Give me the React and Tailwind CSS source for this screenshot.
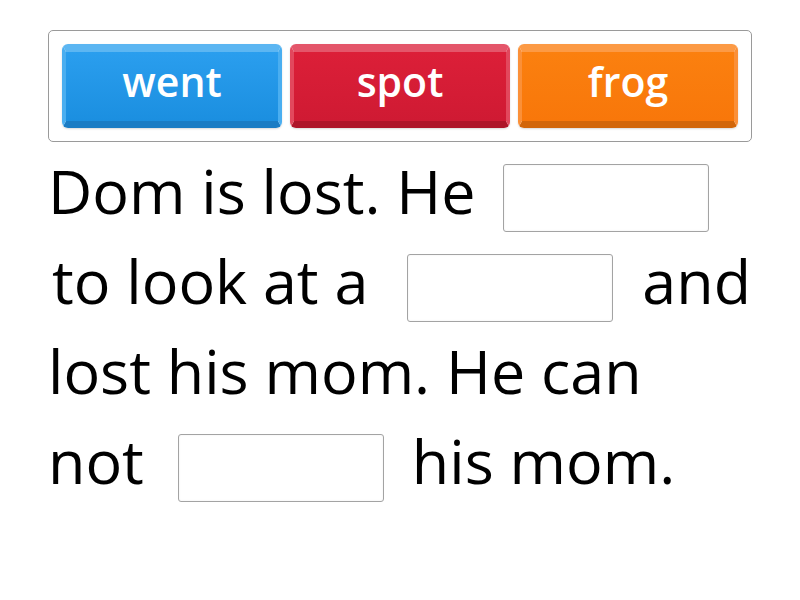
import React from "react";

const words = [
    { text: "went", cls: "bg-gradient-to-b from-[#2a9eee] to-[#1b8fe0] border-t-[#5cb6f2] border-x-[#4aaef0] border-b-[#1a7cc4]" },
    { text: "spot", cls: "bg-gradient-to-b from-[#dc1f38] to-[#cf1a33] border-t-[#e4566a] border-x-[#e2485d] border-b-[#ae1529]" },
    { text: "frog", cls: "bg-gradient-to-b from-[#fb800f] to-[#f8770a] border-t-[#fc9a45] border-x-[#fb9038] border-b-[#d2660a]" },
];

function Blank() {
    return <div className="w-[206px] h-[68px] shrink-0 rounded-[3px] border border-[#a3a3a3] bg-white shadow-[inset_0_0_2px_rgba(0,0,0,0.08)]" />;
}

function Words({ children, className = "" }) {
    return (
        <span className={"inline-block whitespace-nowrap text-black -mt-[16px] " + className}>
            {children}
        </span>
    );
}

export default function App() {
    return (
        <div className="w-[800px] h-[600px] bg-white font-['Open_Sans',sans-serif]">
            {/* word bank */}
            <div className="ml-[48px] mt-[30px] w-[704px] h-[112px] rounded-[5px] border border-[#9a9a9a] flex gap-[8px] px-[13px] pt-[13px]">
                {words.map((w) => (
                    <div
                        key={w.text}
                        className={"w-[220px] h-[84px] rounded-[6px] border-t-[8px] border-x-[4px] border-b-[7px] flex items-center justify-center text-white text-[41px] font-semibold shadow-[0_1px_2px_rgba(0,0,0,0.15)] " + w.cls}
                    >
                        <span className="-mt-[10px]">{w.text}</span>
                    </div>
                ))}
            </div>

            {/* sentence */}
            <div className="ml-[48px] text-[61px] leading-none">
                <div className="h-[90px] mt-[11px] flex items-center">
                    <Words>Dom is lost. He</Words>
                    <div className="ml-[27px]"><Blank /></div>
                </div>
                <div className="h-[90px] flex items-center">
                    <Words className="ml-[4px]">to look at a</Words>
                    <div className="ml-[39px]"><Blank /></div>
                    <Words className="ml-[29px]">and</Words>
                </div>
                <div className="h-[90px] flex items-center">
                    <Words>lost his mom. He can</Words>
                </div>
                <div className="h-[90px] flex items-center">
                    <Words>not</Words>
                    <div className="ml-[34px]"><Blank /></div>
                    <Words className="ml-[28px]">his mom.</Words>
                </div>
            </div>
        </div>
    );
}
